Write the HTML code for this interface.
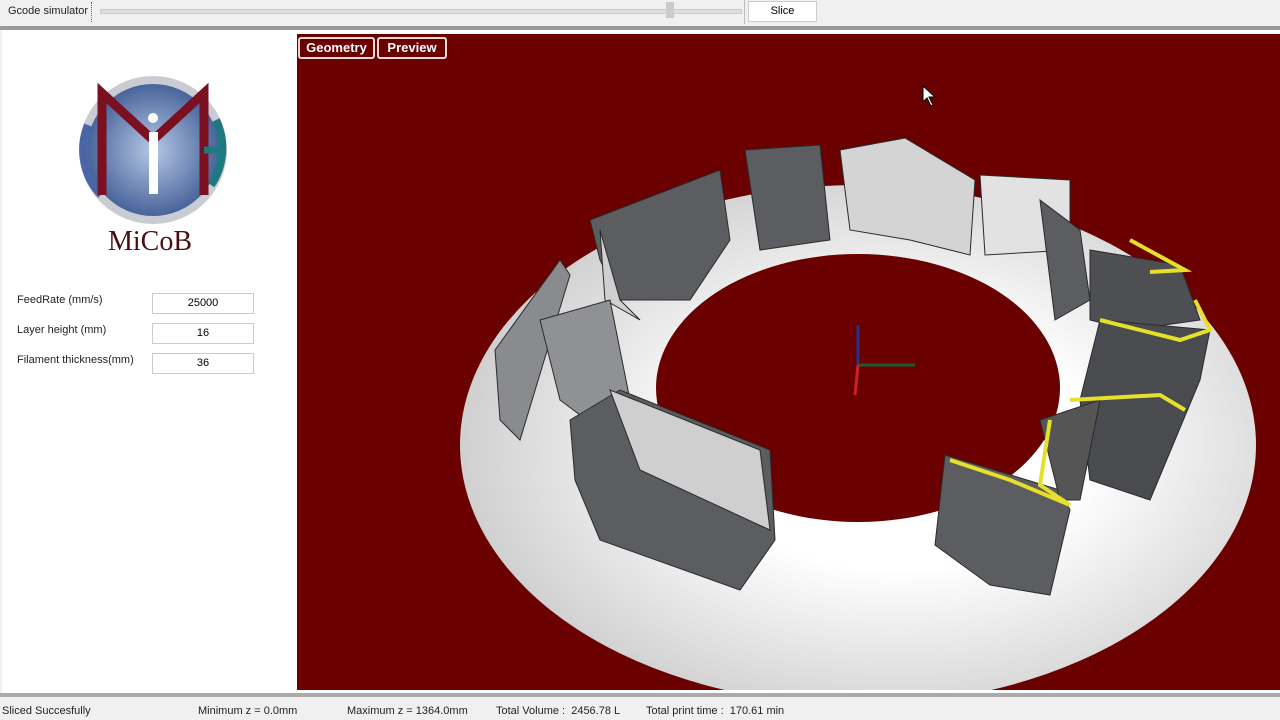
<!DOCTYPE html>
<html><head><meta charset="utf-8"><style>
body{margin:0;width:1280px;height:720px;overflow:hidden;background:#f0f0f0;font-family:"Liberation Sans",sans-serif;position:relative}
.a{position:absolute}
.lbl{font-size:11px;color:#222}
.inp{position:absolute;left:152px;width:100px;height:19px;border:1px solid #ccc;background:#fff;font-size:11px;text-align:center;line-height:19px}
.btn{position:absolute;top:37px;height:18px;border:2px solid #e8d8d8;border-radius:3px;background:#6b0000;color:#fff;font-weight:bold;font-size:13px;line-height:18px;text-align:center}
.st{position:absolute;top:705px;font-size:11px;color:#222}
</style></head><body>
<div class="a lbl" style="left:8px;top:5px">Gcode simulator</div>
<div class="a" style="left:91px;top:2px;width:1px;height:20px;border-left:1px dotted #666"></div>
<div class="a" style="left:100px;top:9px;width:640px;height:3px;background:#ddd;border:1px solid #ccc"></div>
<div class="a" style="left:666px;top:2px;width:8px;height:16px;background:#ccc"></div>
<div class="a" style="left:744px;top:0;width:1px;height:24px;background:#bbb"></div>
<div class="a" style="left:748px;top:1px;width:67px;height:19px;background:#fff;border:1px solid #ccc;font-size:11px;text-align:center;line-height:19px">Slice</div>
<div class="a" style="left:0;top:26px;width:1280px;height:4px;background:#999"></div>
<div class="a" style="left:2px;top:30px;width:1278px;height:664px;background:#fff"></div>
<svg class="a" style="left:76px;top:75px" width="154" height="150" viewBox="0 0 154 150">
<defs><radialGradient id="g" cx="0.5" cy="0.5" r="0.55"><stop offset="0" stop-color="#b7c8e6"/><stop offset="1" stop-color="#3d5a92"/></radialGradient></defs>
<circle cx="77" cy="75" r="74" fill="#c9ccd2"/>
<circle cx="77" cy="75" r="66" fill="url(#g)"/>
<path d="M12 50 A66 66 0 0 0 25 120" stroke="#4a66a8" stroke-width="8" fill="none"/>
<path d="M140 45 A66 66 0 0 1 135 110" stroke="#1e7a80" stroke-width="8" fill="none"/>
<path d="M26 120 V18 L77 65 L128 18 V120" stroke="#7a1020" stroke-width="9" fill="none"/>
<rect x="73" y="57" width="9" height="62" fill="#fff"/><circle cx="77" cy="43" r="5" fill="#fff"/>
<path d="M128 75 H150" stroke="#1e7a80" stroke-width="7"/>
</svg>
<div class="a" style="left:108px;top:226px;font-family:'Liberation Serif',serif;font-size:28px;color:#4a1010">MiCoB</div>
<div class="a lbl" style="left:17px;top:294px">FeedRate (mm/s)</div><div class="inp" style="top:293px">25000</div>
<div class="a lbl" style="left:17px;top:324px">Layer height (mm)</div><div class="inp" style="top:323px">16</div>
<div class="a lbl" style="left:17px;top:354px">Filament thickness(mm)</div><div class="inp" style="top:353px">36</div>
<svg class="a" style="left:297px;top:34px" width="983" height="656" viewBox="297 34 983 656">
<defs><radialGradient id="w" cx="0.55" cy="0.5" r="0.6"><stop offset="0.4" stop-color="#fff"/><stop offset="1" stop-color="#c8c8c8"/></radialGradient></defs>
<rect x="297" y="34" width="983" height="656" fill="#6a0000"/>
<ellipse cx="858" cy="445" rx="398" ry="260" fill="url(#w)"/>
<ellipse cx="858" cy="388" rx="202" ry="134" fill="#6a0000"/>
<g fill="#5c5d60" stroke="#2a2a2a" stroke-width="1">
<path d="M495 350 L560 260 L570 275 L520 440 L500 420Z" fill="#8a8b8e"/>
<path d="M590 220 L720 170 L730 240 L690 300 L620 300 L600 260Z"/>
<path d="M600 230 L620 300 L640 320 L605 300Z" fill="#d0d0d0"/>
<path d="M745 150 L820 145 L830 240 L760 250Z"/>
<path d="M840 150 L905 138 L975 180 L970 255 L910 240 L850 230Z" fill="#d4d4d4"/>
<path d="M980 175 L1070 180 L1070 250 L985 255Z" fill="#e2e2e2"/>
<path d="M1040 200 L1080 230 L1090 300 L1055 320Z"/>
<path d="M1090 250 L1180 265 L1200 320 L1130 330 L1090 320Z" fill="#4e4f52"/>
<path d="M1100 320 L1210 330 L1200 380 L1150 500 L1090 480 L1080 400Z" fill="#4a4b4e"/>
<path d="M540 320 L610 300 L630 400 L600 430 L560 400Z" fill="#909194"/>
<path d="M570 420 L620 390 L770 450 L775 540 L740 590 L600 540 L575 480Z"/>
<path d="M610 390 L760 450 L770 530 L640 470Z" fill="#cfcfcf"/>
<path d="M945 455 L1060 490 L1070 510 L1050 595 L990 585 L935 545Z"/>
<path d="M1040 420 L1070 410 L1100 400 L1080 500 L1060 500Z" fill="#555"/>
</g>
<g fill="none" stroke="#e6e02a" stroke-width="4">
<path d="M1100 320 L1180 340 L1210 330 L1195 300"/>
<path d="M1070 400 L1160 395 L1185 410"/>
<path d="M950 460 L1010 480 L1070 505 L1040 485 L1050 420"/>
<path d="M1130 240 L1185 270 L1150 272"/>
</g>
<path d="M858 365 V325" stroke="#223388" stroke-width="3"/>
<path d="M858 365 H915" stroke="#1c5a2c" stroke-width="3"/>
<path d="M858 365 L855 395" stroke="#cc2222" stroke-width="3"/>
<path d="M923 86 V102 L927 98 L931 106 L933 105 L929 97 L935 97Z" fill="#fff" stroke="#000" stroke-width="1"/>
</svg>
<div class="btn" style="left:298px;width:73px">Geometry</div>
<div class="btn" style="left:377px;width:66px">Preview</div>
<div class="a" style="left:0;top:693px;width:1280px;height:4px;background:#aaa"></div>
<div class="st" style="left:2px">Sliced Succesfully</div>
<div class="st" style="left:198px">Minimum z = 0.0mm</div>
<div class="st" style="left:347px">Maximum z = 1364.0mm</div>
<div class="st" style="left:496px">Total Volume :&nbsp; 2456.78 L</div>
<div class="st" style="left:646px">Total print time :&nbsp; 170.61 min</div>
</body></html>
